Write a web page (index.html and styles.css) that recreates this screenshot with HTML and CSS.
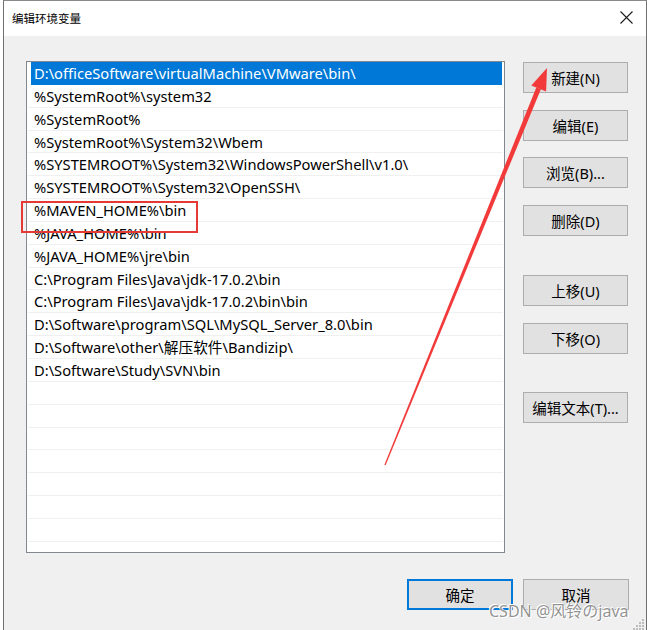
FILE: index.html
```html
<!DOCTYPE html>
<html lang="zh-CN">
<head>
<meta charset="utf-8">
<title>编辑环境变量</title>
<link rel="stylesheet" href="styles.css">
</head>
<body>
<div class="window">
  <div class="titlebar">
    <span class="title">编辑环境变量</span>
    <svg class="close" width="13" height="13" viewBox="0 0 13 13"><path d="M0.5 0.5 L12.5 12.5 M12.5 0.5 L0.5 12.5" stroke="#1a1a1a" stroke-width="1.1" fill="none"/></svg>
  </div>
  <div class="body">
    <div class="main">
      <div class="list">
        <div class="row selected"><span>D:\officeSoftware\virtualMachine\VMware\bin\</span></div>
        <div class="row"><span>%SystemRoot%\system32</span></div>
        <div class="row"><span>%SystemRoot%</span></div>
        <div class="row"><span>%SystemRoot%\System32\Wbem</span></div>
        <div class="row"><span>%SYSTEMROOT%\System32\WindowsPowerShell\v1.0\</span></div>
        <div class="row"><span>%SYSTEMROOT%\System32\OpenSSH\</span></div>
        <div class="row"><span>%MAVEN_HOME%\bin</span></div>
        <div class="row"><span>%JAVA_HOME%\bin</span></div>
        <div class="row"><span>%JAVA_HOME%\jre\bin</span></div>
        <div class="row"><span>C:\Program Files\Java\jdk-17.0.2\bin</span></div>
        <div class="row"><span>C:\Program Files\Java\jdk-17.0.2\bin\bin</span></div>
        <div class="row"><span>D:\Software\program\SQL\MySQL_Server_8.0\bin</span></div>
        <div class="row"><span>D:\Software\other\解压软件\Bandizip\</span></div>
        <div class="row"><span>D:\Software\Study\SVN\bin</span></div>
        <div class="row"></div>
        <div class="row"></div>
        <div class="row"></div>
        <div class="row"></div>
        <div class="row"></div>
        <div class="row"></div>
        <div class="row"></div>
        <div class="row"></div>
      </div>
      <div class="side">
        <button class="btn">新建(N)</button>
        <button class="btn">编辑(E)</button>
        <button class="btn">浏览(B)...</button>
        <button class="btn">删除(D)</button>
        <button class="btn group">上移(U)</button>
        <button class="btn">下移(O)</button>
        <button class="btn group2">编辑文本(T)...</button>
      </div>
    </div>
    <div class="footer">
      <button class="btn ok">确定</button>
      <button class="btn cancel">取消</button>
    </div>
  </div>

  <div class="highlight-box"></div>
  <svg class="arrow" width="647" height="630" viewBox="0 0 647 630">
    <polygon points="384.4,464.8 385.6,465.2 540.9,89.3 536.3,87.4" fill="#f23a3a"/>
    <polygon points="547,68 531.3,85.4 546.1,91.4" fill="#f23a3a"/>
  </svg>
  <div class="watermark">CSDN @风铃のjava</div>
  <svg class="grip" width="12" height="12" viewBox="0 0 12 12">
    <rect x="9" y="1" width="2" height="2" fill="#bdbdbd"/>
    <rect x="6" y="4" width="2" height="2" fill="#bdbdbd"/>
    <rect x="9" y="4" width="2" height="2" fill="#bdbdbd"/>
    <rect x="3" y="7" width="2" height="2" fill="#bdbdbd"/>
    <rect x="6" y="7" width="2" height="2" fill="#bdbdbd"/>
    <rect x="9" y="7" width="2" height="2" fill="#bdbdbd"/>
    <rect x="0" y="10" width="2" height="2" fill="#bdbdbd"/>
    <rect x="3" y="10" width="2" height="2" fill="#bdbdbd"/>
    <rect x="6" y="10" width="2" height="2" fill="#bdbdbd"/>
    <rect x="9" y="10" width="2" height="2" fill="#bdbdbd"/>
  </svg>
</div>
</body>
</html>
```

FILE: styles.css
```css
* { box-sizing: border-box; }
html, body {
  margin: 0;
  padding: 0;
  background: #ffffff;
  font-family: "Noto Sans", "Noto Sans CJK SC", sans-serif;
  color: #000;
}
.window {
  position: relative;
  margin-left: 3px;
  width: 644px;
  height: 630px;
  border-left: 1px solid #707070;
  border-right: 1px solid #707070;
  border-top: 1px solid #8a8a8a;
  background: #f0f0f0;
  overflow: hidden;
}
.titlebar {
  height: 35px;
  background: #ffffff;
  display: flex;
  align-items: center;
  justify-content: space-between;
  padding: 0 13px 0 8px;
}
.title {
  font-family: "Noto Sans CJK SC", sans-serif;
  font-size: 11.5px;
  color: #000;
  margin-top: -2px;
}
.close { display: block; margin-top: -2px; }
.body {
  padding: 25px 17px 0 22px;
}
.main {
  display: flex;
  align-items: flex-start;
}
.list {
  width: 479px;
  height: 492px;
  border: 1px solid #828790;
  background: #fff;
  overflow: hidden;
  padding: 0 1px;
}
.row {
  height: 22.85px;
  border-bottom: 1px solid #f0f0f0;
  font-size: 14.7px;
  line-height: 21px;
  padding-left: 6px;
  padding-top: 1px;
  white-space: nowrap;
  overflow: hidden;
}
.row.selected {
  background: #0078d7;
  color: #fff;
  margin-left: 3px;
  margin-right: 1px;
  padding-left: 3px;
  border-bottom-color: #0078d7;
}
.side {
  display: flex;
  flex-direction: column;
  margin-left: 18px;
  padding-top: 1px;
}
.btn {
  width: 105px;
  height: 31px;
  background: #e1e1e1;
  border: 1px solid #adadad;
  font-family: "Noto Sans", "Noto Sans CJK SC", sans-serif;
  font-size: 14.5px;
  color: #000;
  padding: 0;
  margin: 0 0 16.5px 0;
}
.btn.group { margin-top: 23px; }
.btn.group2 { margin-top: 22px; }
.footer {
  display: flex;
  justify-content: flex-end;
  gap: 10px;
  margin-top: 26px;
}
.footer .btn {
  width: 106px;
  height: 31px;
  margin: 0;
}
.btn.ok {
  border: 2px solid #0078d7;
}
.highlight-box {
  position: absolute;
  left: 17px;
  top: 200px;
  width: 177px;
  height: 32px;
  border: 2px solid #e53935;
}
.arrow {
  position: absolute;
  left: -4px;
  top: -1px;
}
.watermark {
  position: absolute;
  left: 485px;
  top: 597px;
  font-family: "Noto Sans", "Noto Sans CJK SC", sans-serif;
  font-size: 16px;
  color: rgba(110, 110, 110, 0.75);
  text-shadow: 0 0 1px #fff, 1px 1px 0 #fff, -1px -1px 0 #fff;
  white-space: nowrap;
}
.grip {
  position: absolute;
  right: 1px;
  bottom: 0px;
}
```
